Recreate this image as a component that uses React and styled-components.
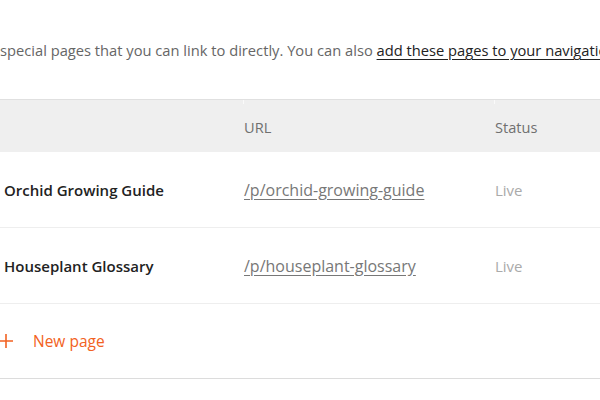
import React from "react";
import styled, { createGlobalStyle } from "styled-components";

const GlobalStyle = createGlobalStyle`
    html, body {
        margin: 0;
        padding: 0;
        background: #ffffff;
    }

    body {
        font-family: "Open Sans", "Noto Sans", sans-serif;
        overflow: hidden;
    }
`;

const pages = [
    { title: "Orchid Growing Guide", url: "/p/orchid-growing-guide", status: "Live" },
    { title: "Houseplant Glossary", url: "/p/houseplant-glossary", status: "Live" },
];

function PlusIcon() {
    return (
        <svg width="14" height="14" viewBox="0 0 14 14" fill="none">
            <path d="M6 0v14M-1 7h14" stroke="#f26222" strokeWidth="1.6" />
        </svg>
    );
}

function App() {
    return (
        <Wrapper>
            <GlobalStyle />
            <Intro>
                special pages that you can link to directly. You can also{" "}
                <a href="#nav">add these pages to your navigation menu</a>.
            </Intro>

            <Table>
                <HeadRow>
                    <HeadCell />
                    <HeadCell $divider>URL</HeadCell>
                    <HeadCell $divider>Status</HeadCell>
                </HeadRow>
                {pages.map((page) => (
                    <Row key={page.url}>
                        <Title>{page.title}</Title>
                        <UrlLink href={page.url}>{page.url}</UrlLink>
                        <Status>{page.status}</Status>
                    </Row>
                ))}
                <AddRow>
                    <PlusIcon />
                    <span>New page</span>
                </AddRow>
            </Table>
        </Wrapper>
    );
}

const Wrapper = styled.div`
    width: 600px;
    height: 400px;
    overflow: hidden;
`;

const Intro = styled.p`
    margin: 0;
    padding-top: 38px;
    height: 60px;
    box-sizing: border-box;
    font-size: 14.7px;
    line-height: 24px;
    color: #666666;
    white-space: nowrap;
    overflow: hidden;

    a {
        color: #222222;
        text-decoration: underline;
        text-underline-offset: 3px;
    }
`;

const Table = styled.div`
    margin-top: 39px;
    width: 640px;
    border-bottom: 1px solid #dcdcdc;
`;

const gridCols = `
    display: grid;
    grid-template-columns: 240px 251px 1fr;
    align-items: center;
    padding-left: 4px;
`;

const HeadRow = styled.div`
    ${gridCols}
    height: 52px;
    background: #efefef;
    border-top: 1px solid #e0e0e0;
`;

const HeadCell = styled.div`
    position: relative;
    height: 100%;
    display: flex;
    align-items: center;
    padding-top: 2px;
    box-sizing: border-box;
    font-size: 14.6px;
    color: #707070;

    &::before {
        content: "";
        display: ${(p) => (p.$divider ? "block" : "none")};
        position: absolute;
        top: 0;
        left: -1px;
        width: 1px;
        height: 4px;
        background: #fafafa;
    }
`;

const Row = styled.div`
    ${gridCols}
    height: 75px;
    border-bottom: 1px solid #eeeeee;
    font-size: 15px;
`;

const Title = styled.div`
    font-weight: 600;
    color: #222222;
`;

const UrlLink = styled.a`
    font-size: 16px;
    color: #777777;
    text-decoration: underline;
    text-underline-offset: 3px;
`;

const Status = styled.div`
    color: #aaaaaa;
`;

const AddRow = styled.div`
    display: flex;
    align-items: center;
    gap: 19px;
    height: 74px;
    font-size: 15.5px;
    color: #f26222;
    cursor: pointer;
`;

export default App;
